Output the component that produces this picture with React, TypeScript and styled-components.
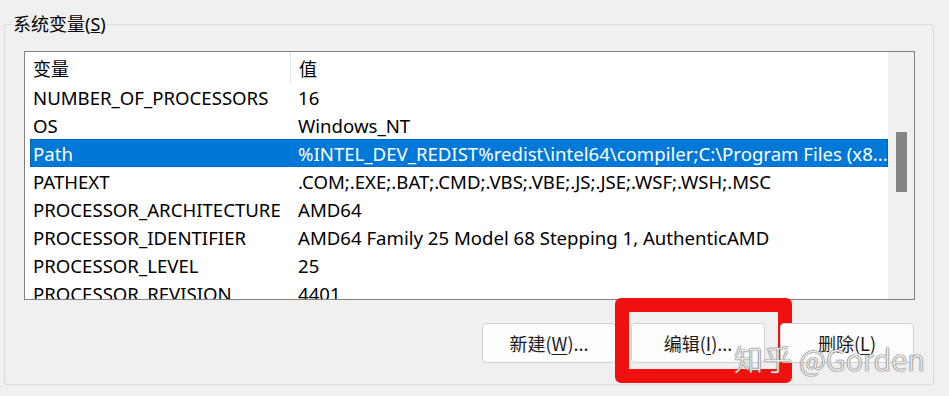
import React from 'react';
import styled, { createGlobalStyle } from 'styled-components';

const GlobalStyle = createGlobalStyle`
  html, body {
    margin: 0;
    padding: 0;
    background: #f0f0f0;
  }
  body {
    width: 949px;
    height: 396px;
    overflow: hidden;
    font-family: "Noto Sans", "Noto Sans CJK SC", sans-serif;
    font-size: 18px;
    color: #000;
  }
`;

const Page = styled.div`
  position: relative;
  width: 949px;
  height: 396px;
  padding: 11px 15px 0 4px;
  box-sizing: border-box;
`;

const Group = styled.fieldset`
  margin: 0;
  padding: 0 18px 22px 19px;
  border: 1px solid #dcdcdc;
  border-radius: 2px;
  height: 374px;
  box-sizing: border-box;
  display: flex;
  flex-direction: column;
`;

const Legend = styled.legend`
  margin-left: -12px;
  padding: 0 1px;
  line-height: 26px;
  font-size: 18px;
`;

const ListBox = styled.div`
  margin-top: 14px;
  height: 249px;
  flex: none;
  box-sizing: border-box;
  border: 1px solid #828282;
  background: #fff;
  display: flex;
  overflow: hidden;
  font-size: 18.6px;
`;

const ListBody = styled.div`
  flex: 1;
  overflow: hidden;
  display: flex;
  flex-direction: column;
`;

const Header = styled.div`
  height: 31px;
  flex: none;
  display: grid;
  grid-template-columns: 260px 1fr;
  padding-left: 5px;
  align-items: center;
`;

const HeaderCell = styled.div<{ $divider?: boolean }>`
  height: 100%;
  display: flex;
  align-items: center;
  padding-left: ${(p) => (p.$divider ? '8px' : '3px')};
  border-left: ${(p) => (p.$divider ? '1px solid #e5e5e5' : 'none')};
  box-sizing: border-box;
  font-size: 18px;
`;

const Row = styled.div<{ $selected?: boolean }>`
  height: 28px;
  flex: none;
  margin-left: 5px;
  display: grid;
  grid-template-columns: 260px 1fr;
  align-items: center;
  box-sizing: border-box;
  background: ${(p) => (p.$selected ? '#0078d7' : 'transparent')};
  color: ${(p) => (p.$selected ? '#fff' : '#000')};
  outline: ${(p) => (p.$selected ? '1px dotted #1b4b80' : 'none')};
  outline-offset: -1px;
`;

const Cell = styled.div<{ $second?: boolean }>`
  padding-left: ${(p) => (p.$second ? '8px' : '3px')};
  white-space: nowrap;
  overflow: hidden;
`;

const ScrollTrack = styled.div`
  width: 26px;
  flex: none;
  background: #f0f0f0;
  position: relative;
`;

const ScrollThumb = styled.div`
  position: absolute;
  left: 8px;
  top: 80px;
  width: 11px;
  height: 60px;
  background: #858585;
`;

const ButtonRow = styled.div`
  margin-top: 23px;
  display: flex;
  justify-content: flex-end;
  gap: 15px;
  padding-right: 1px;
`;

const ButtonSlot = styled.div`
  position: relative;
`;

const Button = styled.button`
  width: 134px;
  height: 40px;
  box-sizing: border-box;
  border: 1px solid #d0d0d0;
  border-radius: 4px;
  background: #fdfdfd;
  font-family: "Noto Sans CJK SC", "Noto Sans", sans-serif;
  font-size: 18px;
  color: #1a1a1a;
  padding: 0;
  u {
    text-underline-offset: 3px;
  }
`;

const Highlight = styled.div`
  position: absolute;
  left: -16px;
  top: -25px;
  width: 177px;
  height: 85px;
  box-sizing: border-box;
  border: 14px solid #f01010;
  border-radius: 6px;
  pointer-events: none;
`;

const Watermark = styled.div`
  position: absolute;
  left: 734px;
  top: 337px;
  font-family: "Noto Sans CJK SC", "Noto Sans", sans-serif;
  font-size: 29px;
  font-weight: 300;
  color: rgba(255, 255, 255, 0.9);
  text-shadow: 0 0 1px #666, 0 0 1px #666, 0 0 2px #999;
  letter-spacing: 0.3px;
  white-space: nowrap;
  pointer-events: none;
`;

const rows: [string, string][] = [
  ['NUMBER_OF_PROCESSORS', '16'],
  ['OS', 'Windows_NT'],
  ['Path', '%INTEL_DEV_REDIST%redist\\intel64\\compiler;C:\\Program Files (x8...'],
  ['PATHEXT', '.COM;.EXE;.BAT;.CMD;.VBS;.VBE;.JS;.JSE;.WSF;.WSH;.MSC'],
  ['PROCESSOR_ARCHITECTURE', 'AMD64'],
  ['PROCESSOR_IDENTIFIER', 'AMD64 Family 25 Model 68 Stepping 1, AuthenticAMD'],
  ['PROCESSOR_LEVEL', '25'],
  ['PROCESSOR_REVISION', '4401'],
];

const App = () => {
  return (
    <Page>
      <GlobalStyle />
      <Group>
        <Legend>
          系统变量(<u>S</u>)
        </Legend>
        <ListBox>
          <ListBody>
            <Header>
              <HeaderCell>变量</HeaderCell>
              <HeaderCell $divider>值</HeaderCell>
            </Header>
            {rows.map(([name, value]) => (
              <Row key={name} $selected={name === 'Path'}>
                <Cell>{name}</Cell>
                <Cell $second>{value}</Cell>
              </Row>
            ))}
          </ListBody>
          <ScrollTrack>
            <ScrollThumb />
          </ScrollTrack>
        </ListBox>
        <ButtonRow>
          <ButtonSlot>
            <Button>
              新建(<u>W</u>)...
            </Button>
          </ButtonSlot>
          <ButtonSlot>
            <Button>
              编辑(<u>I</u>)...
            </Button>
            <Highlight />
          </ButtonSlot>
          <ButtonSlot>
            <Button>
              删除(<u>L</u>)
            </Button>
          </ButtonSlot>
        </ButtonRow>
      </Group>
      <Watermark>知乎 @Gorden</Watermark>
    </Page>
  );
};

export default App;
